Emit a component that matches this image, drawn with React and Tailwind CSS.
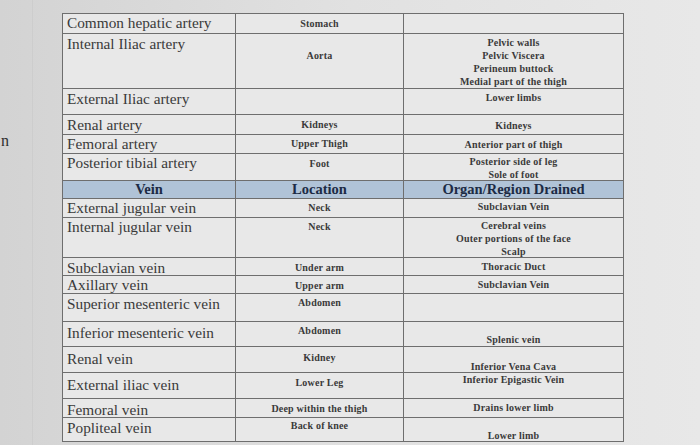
import React from "react";

const rows = [
  { h: "h-[20px]", c1: "Common hepatic artery", p1: "pt-[0px]", c2: "Stomach", p2: "pt-[3px]", c3: [], p3: "pt-[2px]" },
  { h: "h-[55px]", c1: "Internal Iliac artery", p1: "pt-[1px]", c2: "Aorta", p2: "pt-[15px]", c3: ["Pelvic walls", "Pelvic Viscera", "Perineum buttock", "Medial part of the thigh"], p3: "pt-[2px]" },
  { h: "h-[26px]", c1: "External Iliac artery", p1: "pt-[1px]", c2: "", p2: "pt-[2px]", c3: ["Lower limbs"], p3: "pt-[2px]" },
  { h: "h-[20px]", c1: "Renal artery", p1: "pt-[1px]", c2: "Kidneys", p2: "pt-[3px]", c3: ["Kidneys"], p3: "pt-[4px]" },
  { h: "h-[19px]", c1: "Femoral artery", p1: "pt-[0px]", c2: "Upper Thigh", p2: "pt-[2px]", c3: ["Anterior part of thigh"], p3: "pt-[3px]" },
  { h: "h-[27px]", c1: "Posterior tibial artery", p1: "pt-[0px]", c2: "Foot", p2: "pt-[3px]", c3: ["Posterior side of leg", "Sole of foot"], p3: "pt-[1px]" },
  { header: true },
  { h: "h-[19px]", c1: "External jugular vein", p1: "pt-[0px]", c2: "Neck", p2: "pt-[2px]", c3: ["Subclavian Vein"], p3: "pt-[1px]" },
  { h: "h-[40px]", c1: "Internal jugular vein", p1: "pt-[0px]", c2: "Neck", p2: "pt-[2px]", c3: ["Cerebral veins", "Outer portions of the face", "Scalp"], p3: "pt-[1px]" },
  { h: "h-[18px]", c1: "Subclavian vein", p1: "pt-[1px]", c2: "Under arm", p2: "pt-[3px]", c3: ["Thoracic Duct"], p3: "pt-[2px]" },
  { h: "h-[18px]", c1: "Axillary vein", p1: "pt-[0px]", c2: "Upper arm", p2: "pt-[3px]", c3: ["Subclavian Vein"], p3: "pt-[2px]" },
  { h: "h-[28px]", c1: "Superior mesenteric vein", p1: "pt-[1px]", c2: "Abdomen", p2: "pt-[2px]", c3: [], p3: "pt-[2px]" },
  { h: "h-[25px]", c1: "Inferior mesenteric vein", p1: "pt-[2px]", c2: "Abdomen", p2: "pt-[2px]", c3: ["Splenic vein"], p3: "pt-[11px]" },
  { h: "h-[26px]", c1: "Renal vein", p1: "pt-[3px]", c2: "Kidney", p2: "pt-[4px]", c3: ["Inferior Vena Cava"], p3: "pt-[13px]" },
  { h: "h-[26px]", c1: "External iliac vein", p1: "pt-[3px]", c2: "Lower Leg", p2: "pt-[3px]", c3: ["Inferior Epigastic Vein"], p3: "pt-[0px]" },
  { h: "h-[19px]", c1: "Femoral vein", p1: "pt-[2px]", c2: "Deep within the thigh", p2: "pt-[3px]", c3: ["Drains lower limb"], p3: "pt-[2px]" },
  { h: "h-[24px]", c1: "Popliteal vein", p1: "pt-[1px]", c2: "Back of knee", p2: "pt-[1px]", c3: ["Lower limb"], p3: "pt-[11px]" },
];

const serif = "font-['Liberation_Serif',serif]";
const cellBase = "border-r border-b border-[#6e6e6e] overflow-hidden";
const small = "text-[10px] font-bold leading-[13px] tracking-[0.2px] text-[#3a3a3a] text-center";
const big = "text-[15.3px] leading-[17px] text-[#3a3a3a] pl-[4px] whitespace-nowrap";
const head = "text-[14.5px] font-bold leading-[17px] text-[#1c2b45] text-center";

export default function App() {
  return (
    <div className={`w-[700px] h-[445px] overflow-hidden flex bg-gradient-to-r from-[#d3d3d3] via-[#e1e1e1] to-[#e8e8e8] ${serif}`}>
      <div className="w-[62px] shrink-0 flex">
        <div className="w-[33px] border-r border-[#cdcdcd] pt-[132px]">
          <span className="block ml-[1px] text-[16px] leading-[18px] text-[#2e2e2e]">n</span>
        </div>
      </div>
      <div className="mt-[13px] self-start grid grid-cols-[173px_168px_220px] border-l border-t border-[#6e6e6e] bg-[#e8e8e8]">
        {rows.map((r, i) =>
          r.header ? (
            <React.Fragment key={i}>
              <div className={`${cellBase} h-[18px] bg-[#b0c3d7] ${head}`}>Vein</div>
              <div className={`${cellBase} h-[18px] bg-[#b0c3d7] ${head}`}>Location</div>
              <div className={`${cellBase} h-[18px] bg-[#b0c3d7] ${head}`}>Organ/Region Drained</div>
            </React.Fragment>
          ) : (
            <React.Fragment key={i}>
              <div className={`${cellBase} ${r.h} ${r.p1} ${big}`}>{r.c1}</div>
              <div className={`${cellBase} ${r.h} ${r.p2} ${small}`}>{r.c2}</div>
              <div className={`${cellBase} ${r.h} ${r.p3} ${small}`}>
                {r.c3.map((t) => (
                  <div key={t}>{t}</div>
                ))}
              </div>
            </React.Fragment>
          )
        )}
      </div>
    </div>
  );
}
